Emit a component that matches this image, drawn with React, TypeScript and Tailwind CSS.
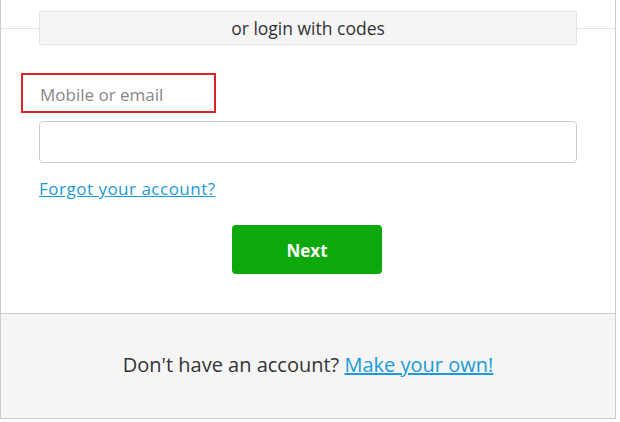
export default function App() {
  return (
    <div className="w-[620px] h-[422px] bg-white" style={{ fontFamily: "'Open Sans', sans-serif" }}>
      <div className="w-[616px] h-[419px] border-x border-b border-[#cccccc] flex flex-col">
        <div className="flex-1 flex flex-col">
          {/* divider with codes box */}
          <div className="relative mt-[11px] h-[34px]">
            <div className="absolute left-0 right-0 top-[17px] border-t border-[#e3e3e3]"></div>
            <div className="relative mx-[38px] h-[34px] bg-[#f5f5f5] border border-[#e3e3e3] rounded-[2px] flex items-center justify-center text-[17.5px] text-[#333]">
              or login with codes
            </div>
          </div>

          <div className="pl-[20px] mt-[28px]">
            <div className="w-[195px] h-[40px] border-2 border-[#d9232b] flex items-center pl-[17px] pt-[3px] text-[17px] text-[#888]">
              Mobile or email
            </div>
          </div>

          <div className="px-[38px] mt-[8px]">
            <input className="w-full h-[42px] border border-[#cccccc] rounded-[4px] outline-none px-3" />
          </div>

          <div className="px-[38px] mt-[13px]">
            <a href="#" className="text-[17px] tracking-[0.5px] text-[#1a9ad6] underline">
              Forgot your account?
            </a>
          </div>

          <div className="flex justify-center mt-[23px] ml-[-2px]">
            <button className="w-[150px] h-[49px] bg-[#0ca80c] rounded-[4px] text-white text-[17px] font-bold pt-[3px]">
              Next
            </button>
          </div>
        </div>

        <div className="h-[105px] bg-[#f5f5f5] border-t border-[#cccccc] flex items-center justify-center text-[20px] text-[#333] pb-[2px]">
          <span>
            Don't have an account?{" "}
            <a href="#" className="text-[#1a9ad6] underline">Make your own!</a>
          </span>
        </div>
      </div>
    </div>
  );
}
